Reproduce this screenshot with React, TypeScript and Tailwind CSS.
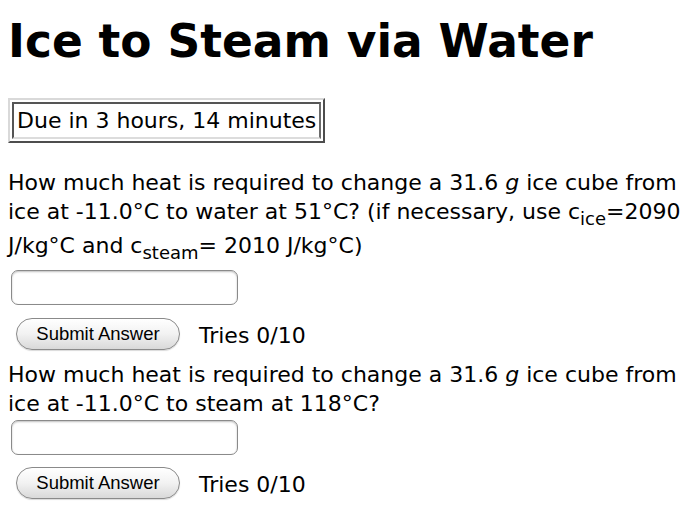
import React from "react";

function AnswerBlock({ inputMt, buttonMt }: { inputMt: string; buttonMt: string }) {
  return (
    <div>
      <div className={inputMt}>
        <input
          type="text"
          className="ml-[3px] block h-[35px] w-[227px] rounded-[7px] border border-[#8a8a8a] bg-white shadow-[inset_0_1px_2px_rgba(0,0,0,0.25)] outline-none"
        />
      </div>
      <div className={`${buttonMt} flex items-center`}>
        <button
          type="button"
          className="ml-[8px] h-[32px] w-[164px] rounded-full border border-[#8a8a8a] bg-gradient-to-b from-[#ffffff] via-[#f2f2f2] to-[#d9d9d9] text-[18.5px] leading-none text-black shadow-[0_1px_1px_rgba(0,0,0,0.15)]"
          style={{ fontFamily: '"Liberation Sans", Arial, sans-serif' }}
        >
          Submit Answer
        </button>
        <span className="ml-[19px] mt-[2px] leading-[29px]">Tries 0/10</span>
      </div>
    </div>
  );
}

const subCls = "static text-[18px] align-[-6px] leading-[24px]";

export default function App() {
  return (
    <div
      className="min-h-[521px] bg-white pl-[8px] pr-0 text-[22px] leading-[29px] text-black"
      style={{ fontFamily: '"DejaVu Sans", Verdana, sans-serif' }}
    >
      <h1 className="pt-[16px] text-[45.5px] font-bold leading-[52px]">Ice to Steam via Water</h1>

      <div className="mt-[30px] inline-block border-2 border-t-[#d9d9d9] border-l-[#d9d9d9] border-b-[#4d4d4d] border-r-[#4d4d4d] p-[2px]">
        <div className="border-2 border-t-[#555555] border-l-[#555555] border-r-[#6b6b6b] border-b-[#dcdcdc] px-[3px] py-[2px] leading-[29px]">
          Due in 3 hours, 14 minutes
        </div>
      </div>

      <p className="mt-[25px]">
        How much heat is required to change a 31.6 <i>g</i> ice cube from ice at -11.0°C to water at 51°C? (if
        necessary, use c<sub className={subCls}>ice</sub>=2090 J/kg°C and c<sub className={subCls}>steam</sub>= 2010
        J/kg°C)
      </p>
      <AnswerBlock inputMt="mt-[5px]" buttonMt="mt-[13px]" />

      <p className="mt-[10px]">
        How much heat is required to change a 31.6 <i>g</i> ice cube from ice at -11.0°C to steam at 118°C?
      </p>
      <AnswerBlock inputMt="mt-[2px]" buttonMt="mt-[12px]" />
    </div>
  );
}
